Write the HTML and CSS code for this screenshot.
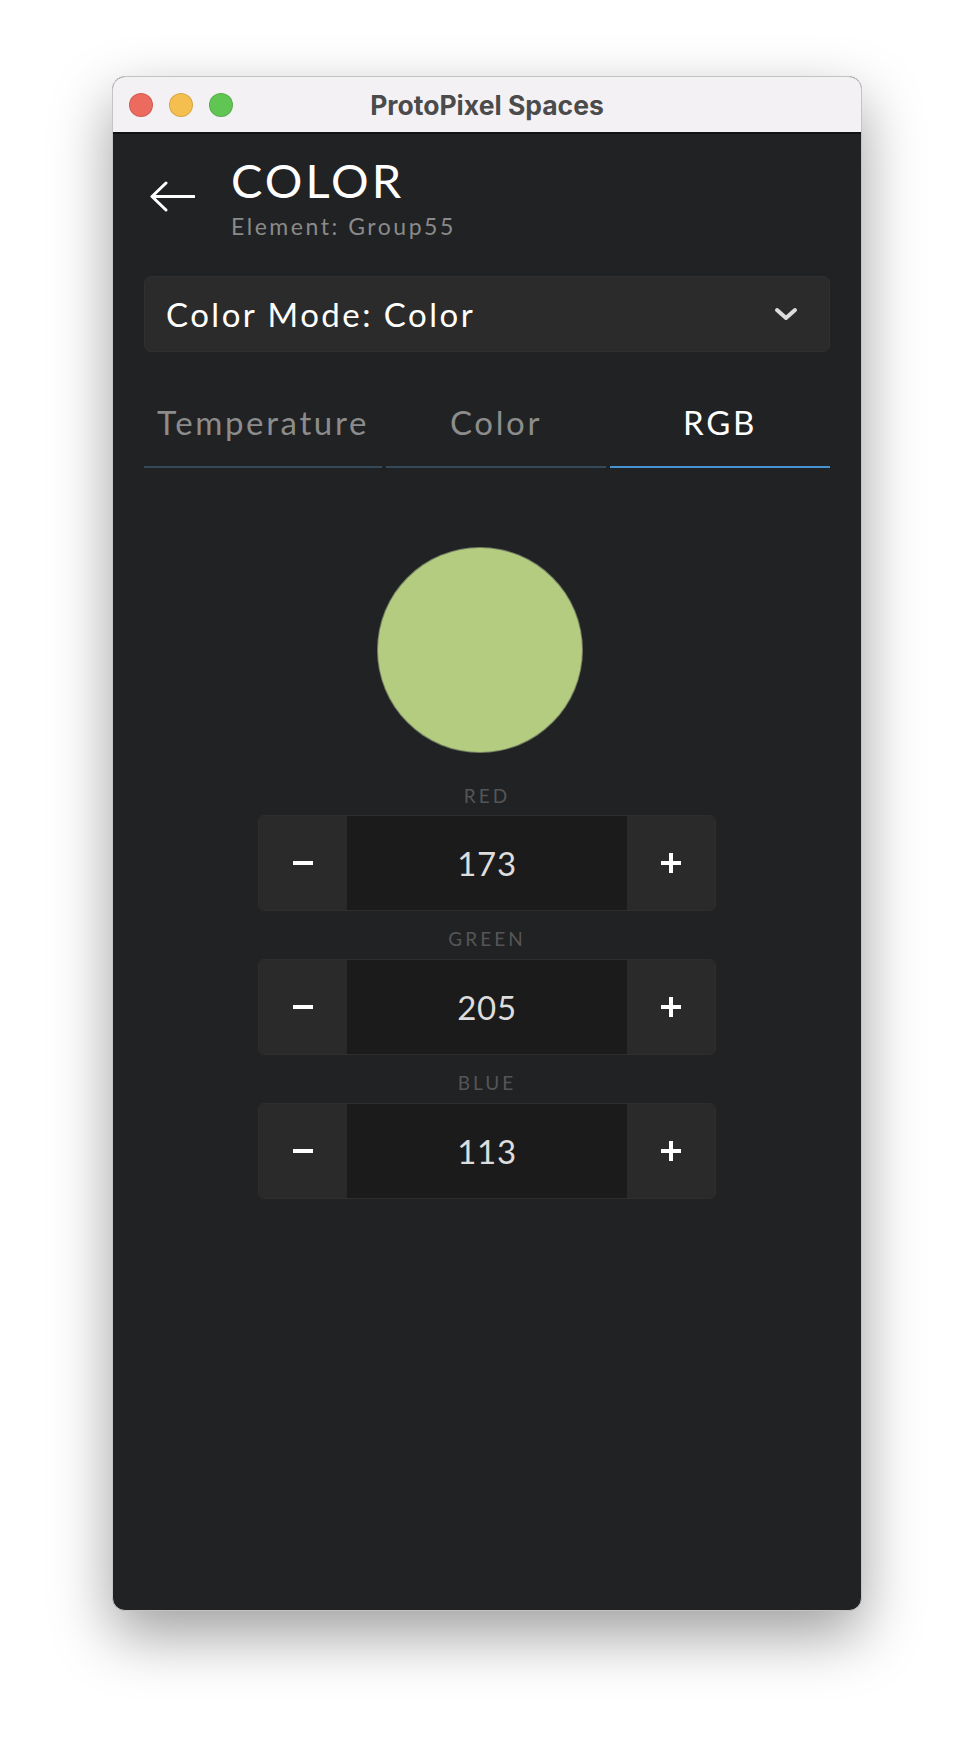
FILE: index.html
```html
<!DOCTYPE html>
<html lang="en">
<head>
    <meta charset="UTF-8">
    <meta name="viewport" content="width=device-width, initial-scale=1.0">
    <title>ProtoPixel Spaces</title>
    <link rel="stylesheet" href="styles.css">
</head>
<body>
    <div class="window">
        <div class="titlebar">
            <div class="lights">
                <span class="light red"></span>
                <span class="light yellow"></span>
                <span class="light green"></span>
            </div>
            <div class="window-title">ProtoPixel Spaces</div>
        </div>

        <div class="content">
            <div class="header">
                <svg class="back" width="46" height="31" viewBox="0 0 46 31">
                    <path d="M45 15.5H3 M17 2L3 15.5L17 29" fill="none" stroke="#fff" stroke-width="3" stroke-linecap="round" stroke-linejoin="round"/>
                </svg>
                <div class="header-text">
                    <h1>COLOR</h1>
                    <p class="subtitle">Element: Group55</p>
                </div>
            </div>

            <div class="select">
                <span>Color Mode: Color</span>
                <svg width="24" height="14" viewBox="0 0 24 14">
                    <path d="M3 3L12 11L21 3" fill="none" stroke="#ddd" stroke-width="4" stroke-linecap="round" stroke-linejoin="round"/>
                </svg>
            </div>

            <div class="tabs">
                <div class="tab">Temperature</div>
                <div class="tab">Color</div>
                <div class="tab active">RGB</div>
            </div>

            <div class="swatch-row">
                <div class="swatch" style="background: rgb(180, 204, 128);"></div>
            </div>

            <div class="channels">
                <div class="channel">
                    <div class="channel-label">RED</div>
                    <div class="stepper">
                        <button class="step-btn">
                            <svg width="20" height="20" viewBox="0 0 20 20"><path d="M0 10H20" stroke="#fff" stroke-width="4"/></svg>
                        </button>
                        <div class="step-value">173</div>
                        <button class="step-btn">
                            <svg width="20" height="20" viewBox="0 0 20 20"><path d="M0 10H20 M10 0V20" stroke="#fff" stroke-width="4"/></svg>
                        </button>
                    </div>
                </div>
                <div class="channel">
                    <div class="channel-label">GREEN</div>
                    <div class="stepper">
                        <button class="step-btn">
                            <svg width="20" height="20" viewBox="0 0 20 20"><path d="M0 10H20" stroke="#fff" stroke-width="4"/></svg>
                        </button>
                        <div class="step-value">205</div>
                        <button class="step-btn">
                            <svg width="20" height="20" viewBox="0 0 20 20"><path d="M0 10H20 M10 0V20" stroke="#fff" stroke-width="4"/></svg>
                        </button>
                    </div>
                </div>
                <div class="channel">
                    <div class="channel-label">BLUE</div>
                    <div class="stepper">
                        <button class="step-btn">
                            <svg width="20" height="20" viewBox="0 0 20 20"><path d="M0 10H20" stroke="#fff" stroke-width="4"/></svg>
                        </button>
                        <div class="step-value">113</div>
                        <button class="step-btn">
                            <svg width="20" height="20" viewBox="0 0 20 20"><path d="M0 10H20 M10 0V20" stroke="#fff" stroke-width="4"/></svg>
                        </button>
                    </div>
                </div>
            </div>
        </div>
    </div>
</body>
</html>
```

FILE: styles.css
```css
body {
    margin: 0;
    padding: 76px 112px 0;
    background: #fff;
    height: 1760px;
    box-sizing: border-box;
    font-family: Lato, "Open Sans", sans-serif;
}
.window {
    width: 750px;
    height: 1535px;
    box-sizing: border-box;
    border: 1px solid #c4c4c4;
    border-radius: 13px;
    overflow: hidden;
    background: #212224;
    box-shadow: 0 24px 60px rgba(0, 0, 0, 0.38);
    display: flex;
    flex-direction: column;
}
.titlebar {
    height: 55px;
    flex: none;
    background: #f4f1f5;
    border-bottom: 2px solid #111;
    display: flex;
    align-items: center;
    position: relative;
}
.lights {
    display: flex;
    gap: 16px;
    padding-left: 16px;
}
.light {
    width: 22px;
    height: 22px;
    border-radius: 50%;
    border: 1px solid rgba(0, 0, 0, 0.12);
}
.light.red {
    background: #ec6a5e;
}
.light.yellow {
    background: #f4bf4f;
}
.light.green {
    background: #61c554;
}
.window-title {
    position: absolute;
    left: 0;
    right: 0;
    text-align: center;
    font-family: Inter, "Liberation Sans", sans-serif;
    font-weight: 700;
    font-size: 26.5px;
    color: #4b4b4b;
    pointer-events: none;
}
.content {
    padding: 18px 31px 0;
}
.header {
    display: flex;
    align-items: center;
}
.back {
    margin-left: 5px;
    margin-right: 36px;
}
.header h1 {
    margin: 0;
    font-size: 47px;
    font-weight: 400;
    line-height: 1.2;
    color: #fff;
    letter-spacing: 0.065em;
}
.subtitle {
    margin: 5px 0 0;
    font-size: 23px;
    line-height: 1.2;
    color: #8a8a8a;
    letter-spacing: 0.11em;
}
.select {
    margin-top: 35px;
    height: 76px;
    box-sizing: border-box;
    background: #2b2b2b;
    border: 1px solid #303030;
    border-radius: 7px;
    display: flex;
    align-items: center;
    justify-content: space-between;
    padding: 0 31px 0 21px;
    font-size: 33px;
    color: #fff;
    letter-spacing: 0.075em;
}
.tabs {
    margin-top: 31px;
    display: grid;
    grid-template-columns: 238px 220px 220px;
    gap: 4px;
}
.tab {
    text-align: center;
    padding: 20px 0 23px;
    font-size: 33px;
    line-height: 1.2;
    color: #8c8c8c;
    letter-spacing: 0.08em;
    border-bottom: 2px solid #34495a;
}
.tab.active {
    color: #fff;
    border-bottom-color: #4792d2;
}
.swatch-row {
    display: flex;
    justify-content: center;
    padding-right: 14px;
    margin-top: 80px;
}
.swatch {
    width: 204px;
    height: 204px;
    border-radius: 50%;
    box-shadow: 0 0 0 1px rgba(200, 220, 160, 0.5);
}
.channels {
    margin-top: 33px;
    display: flex;
    flex-direction: column;
    align-items: center;
    gap: 17px;
}
.channel {
    width: 458px;
}
.channel-label {
    text-align: center;
    font-size: 19px;
    line-height: 1.2;
    color: #555;
    letter-spacing: 0.16em;
    margin-bottom: 8px;
}
.stepper {
    display: grid;
    grid-template-columns: 88px 1fr 88px;
    height: 96px;
    box-sizing: border-box;
    border: 1px solid #2e2e2e;
    border-radius: 6px;
    overflow: hidden;
}
.step-btn {
    background: #2a2a2a;
    border: none;
    padding: 0;
    display: flex;
    align-items: center;
    justify-content: center;
    cursor: pointer;
}
.step-value {
    background: #1b1b1b;
    display: flex;
    align-items: center;
    justify-content: center;
    font-size: 33px;
    color: #ddd;
    letter-spacing: 0.02em;
}
```
